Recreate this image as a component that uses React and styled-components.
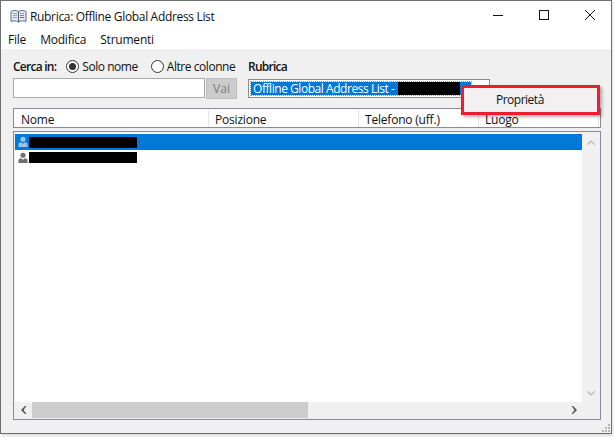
import React from 'react';
import styled, { createGlobalStyle } from 'styled-components';

const GlobalStyle = createGlobalStyle`
  html, body {
    margin: 0;
    padding: 0;
    background: #fff;
    overflow: hidden;
  }
  body {
    font-family: "Open Sans", "Liberation Sans", sans-serif;
    font-size: 12px;
    color: #111;
  }
`;

const Page = styled.div`
  width: 614px;
  height: 437px;
`;

const Window = styled.div`
  position: relative;
  box-sizing: border-box;
  width: 612px;
  height: 434px;
  border: 1px solid #6e6e6e;
  display: flex;
  flex-direction: column;
  background: #f0f0f0;
  box-shadow: 1px 2px 3px rgba(0, 0, 0, 0.14);
`;

const TitleBar = styled.div`
  height: 30px;
  background: #fff;
  display: flex;
  align-items: center;
  padding-left: 9px;
  flex: none;
`;

const Title = styled.span`
  margin-left: 3px;
  letter-spacing: -0.33px;
  color: #111;
`;

const WindowButtons = styled.div`
  margin-left: auto;
  display: flex;
  height: 30px;
`;

const WindowButton = styled.div`
  box-sizing: border-box;
  width: 46px;
  height: 30px;
  padding: 0 0 2px 4px;
  display: flex;
  align-items: center;
  justify-content: center;
`;

const MenuBar = styled.div`
  height: 18px;
  padding: 0 0 1px 7px;
  box-sizing: border-box;
  background: #fff;
  display: flex;
  align-items: center;
  gap: 14px;
  flex: none;
  letter-spacing: -0.22px;
`;

const Content = styled.div`
  flex: 1;
  display: flex;
  flex-direction: column;
  padding: 7px 10px 13px 12px;
  min-height: 0;
`;

const SearchArea = styled.div`
  display: flex;
  gap: 11px;
  flex: none;
`;

const SearchColumn = styled.div`
  width: 224px;
  display: flex;
  flex-direction: column;
`;

const RadioRow = styled.div`
  height: 20px;
  margin-bottom: 2px;
  display: flex;
  align-items: center;
  letter-spacing: -0.45px;
  white-space: nowrap;
`;

const Bold = styled.span`
  font-weight: 600;
  letter-spacing: -0.75px;
  margin-right: ${(p) => p.$gap || 0}px;
`;

const Radio = styled.span`
  box-sizing: border-box;
  width: 13px;
  height: 13px;
  border-radius: 50%;
  border: 1px solid #333;
  background: #fff;
  display: flex;
  align-items: center;
  justify-content: center;
  margin-right: 3px;
  flex: none;
  &::after {
    content: '';
    display: ${(p) => (p.$checked ? 'block' : 'none')};
    width: 7px;
    height: 7px;
    border-radius: 50%;
    background: #333;
  }
`;

const RadioLabel = styled.span`
  margin-right: ${(p) => p.$gap || 0}px;
`;

const InputRow = styled.div`
  display: flex;
  gap: 1px;
  height: 21px;
`;

const TextInput = styled.div`
  box-sizing: border-box;
  width: 192px;
  height: 20px;
  background: #fff;
  border: 1px solid #a9a9a9;
`;

const GoButton = styled.div`
  box-sizing: border-box;
  width: 31px;
  height: 21px;
  background: #cccccc;
  border: 1px solid #bfbfbf;
  color: #7a7a7a;
  display: flex;
  align-items: center;
  justify-content: center;
`;

const BookColumn = styled.div`
  display: flex;
  flex-direction: column;
`;

const BookLabel = styled.div`
  height: 20px;
  margin-bottom: 3px;
  display: flex;
  align-items: center;
`;

const Combo = styled.div`
  box-sizing: border-box;
  width: 242px;
  height: 19px;
  background: #fff;
  border: 1px solid #8c8c8c;
  padding: 2px 0 2px 2px;
  display: flex;
`;

const ComboSelection = styled.div`
  box-sizing: border-box;
  width: 220px;
  height: 13px;
  background: #0078d7;
  color: #fff;
  outline: 1px dotted #e08a2c;
  display: flex;
  align-items: center;
  padding-left: 2px;
  white-space: nowrap;
  letter-spacing: -0.45px;
`;

const ComboRedaction = styled.span`
  width: 62px;
  height: 13px;
  background: #000;
  margin-left: 3px;
  flex: none;
`;

const HeaderRow = styled.div`
  box-sizing: border-box;
  width: 588px;
  height: 20px;
  margin-top: 9px;
  flex: none;
  background: #fff;
  border: 1px solid #8a8a96;
  display: flex;
  align-items: center;
`;

const HeaderCell = styled.div`
  box-sizing: border-box;
  width: ${(p) => p.$width}px;
  height: 17px;
  padding: 2px 0 0 ${(p) => p.$pad || 6}px;
  border-right: 1px solid #e3e3e3;
  display: flex;
  align-items: center;
  letter-spacing: -0.2px;
`;

const ListBox = styled.div`
  box-sizing: border-box;
  width: 588px;
  height: 289px;
  margin-top: 3px;
  flex: none;
  background: #f0f0f0;
  border: 1px solid #8a8a96;
  padding: 1px;
  display: grid;
  grid-template-columns: 1fr 17px;
  grid-template-rows: 1fr 16px;
`;

const Rows = styled.div`
  background: #fff;
  padding-top: 1px;
`;

const Row = styled.div`
  height: ${(p) => (p.$selected ? 16 : 15)}px;
  display: flex;
  align-items: center;
  padding-left: 3px;
  background: ${(p) => (p.$selected ? '#0078d7' : 'transparent')};
`;

const Redaction = styled.span`
  width: 108px;
  height: 11px;
  background: #000;
  margin-left: 1px;
`;

const VScroll = styled.div`
  background: #f0f0f0;
  display: flex;
  flex-direction: column;
  justify-content: space-between;
  align-items: center;
  padding: 5px 0 4px;
`;

const HScroll = styled.div`
  background: #f0f0f0;
  display: flex;
  align-items: center;
`;

const ScrollEnd = styled.div`
  width: 17px;
  height: 16px;
  display: flex;
  align-items: center;
  justify-content: center;
  flex: none;
`;

const Track = styled.div`
  flex: 1;
  display: flex;
  height: 100%;
`;

const Thumb = styled.div`
  width: 276px;
  height: 100%;
  background: #cdcdcd;
`;

const Corner = styled.div`
  background: #f0f0f0;
`;

const Grip = styled.svg`
  position: absolute;
  right: 0;
  bottom: 0;
`;

const ContextMenu = styled.div`
  position: absolute;
  left: 460px;
  top: 84px;
  box-sizing: border-box;
  width: 139px;
  height: 30px;
  background: #f2f0f0;
  border: 3px solid #ed1c2e;
  padding: 0 0 1px 32px;
  display: flex;
  align-items: center;
  letter-spacing: -0.5px;
  box-shadow: 2px 2px 3px rgba(0, 0, 0, 0.3);
`;

const Chevron = ({ dir, color }) => {
  const paths = {
    up: 'M1 6 L5 2 L9 6 L9 7.5 L5 4.5 L1 7.5 Z',
    down: 'M1 2.5 L5 5.5 L9 2.5 L9 4 L5 8 L1 4 Z',
    left: 'M6 1 L2 5 L6 9 L7.5 9 L4.5 5 L7.5 1 Z',
    right: 'M4 1 L8 5 L4 9 L2.5 9 L5.5 5 L2.5 1 Z',
  };
  return (
    <svg width="10" height="10" viewBox="0 0 10 10">
      <path d={paths[dir]} fill={color} />
    </svg>
  );
};

const BookIcon = () => (
  <svg width="17" height="14" viewBox="0 0 17 14">
    <path d="M1 2.5 C3 1 6 1 8.5 2.5 C11 1 14 1 16 2.5 V12.5 C14 11.5 11 11.5 8.5 13 C6 11.5 3 11.5 1 12.5 Z" fill="#dfe8f2" stroke="#5b6f8f" strokeWidth="1" />
    <path d="M8.5 2.5 V13" stroke="#4a5a75" strokeWidth="1" />
    <path d="M3 4.5 H7 M3 6.5 H7 M3 8.5 H7" stroke="#8fa5c2" strokeWidth="1" />
    <path d="M10 4.5 H14" stroke="#c8a030" strokeWidth="1" />
    <path d="M10 6.5 H14" stroke="#6a9d4a" strokeWidth="1" />
    <path d="M10 8.5 H14" stroke="#c05a4a" strokeWidth="1" />
  </svg>
);

const UserIcon = ({ color }) => (
  <svg width="10" height="12" viewBox="0 0 11 13">
    <circle cx="5.5" cy="3.5" r="2.8" fill={color} />
    <path d="M0.5 12 V9 C0.5 7.5 2 7 3.5 6.8 L5.5 8.5 L7.5 6.8 C9 7 10.5 7.5 10.5 9 V12 Z" fill={color} />
  </svg>
);

const columns = [
  { label: 'Nome', width: 195, pad: 7 },
  { label: 'Posizione', width: 150 },
  { label: 'Telefono (uff.)', width: 120 },
  { label: 'Luogo', width: 120 },
];

function App() {
  return (
    <Page>
      <GlobalStyle />
      <Window>
        <TitleBar>
          <BookIcon />
          <Title>Rubrica: Offline Global Address List</Title>
          <WindowButtons>
            <WindowButton>
              <svg width="10" height="10" viewBox="0 0 10 10">
                <path d="M0 5.5 H10" stroke="#111" />
              </svg>
            </WindowButton>
            <WindowButton>
              <svg width="10" height="10" viewBox="0 0 10 10">
                <rect x="0.5" y="0.5" width="9" height="9" fill="none" stroke="#111" />
              </svg>
            </WindowButton>
            <WindowButton>
              <svg width="10" height="10" viewBox="0 0 10 10">
                <path d="M0 0 L10 10 M10 0 L0 10" stroke="#111" />
              </svg>
            </WindowButton>
          </WindowButtons>
        </TitleBar>
        <MenuBar>
          <span>File</span>
          <span>Modifica</span>
          <span>Strumenti</span>
        </MenuBar>
        <Content>
          <SearchArea>
            <SearchColumn>
              <RadioRow>
                <Bold $gap={10}>Cerca in:</Bold>
                <Radio $checked />
                <RadioLabel $gap={13}>Solo nome</RadioLabel>
                <Radio />
                <RadioLabel>Altre colonne</RadioLabel>
              </RadioRow>
              <InputRow>
                <TextInput />
                <GoButton>Vai</GoButton>
              </InputRow>
            </SearchColumn>
            <BookColumn>
              <BookLabel>
                <Bold>Rubrica</Bold>
              </BookLabel>
              <Combo>
                <ComboSelection>
                  Offline Global Address List -
                  <ComboRedaction />
                </ComboSelection>
              </Combo>
            </BookColumn>
          </SearchArea>
          <HeaderRow>
            {columns.map((c) => (
              <HeaderCell key={c.label} $width={c.width} $pad={c.pad}>
                {c.label}
              </HeaderCell>
            ))}
          </HeaderRow>
          <ListBox>
            <Rows>
              <Row $selected>
                <UserIcon color="#9cc4ea" />
                <Redaction />
              </Row>
              <Row>
                <UserIcon color="#6f6f6f" />
                <Redaction />
              </Row>
            </Rows>
            <VScroll>
              <Chevron dir="up" color="#c2c2c2" />
              <Chevron dir="down" color="#c2c2c2" />
            </VScroll>
            <HScroll>
              <ScrollEnd>
                <Chevron dir="left" color="#505050" />
              </ScrollEnd>
              <Track>
                <Thumb />
              </Track>
              <ScrollEnd>
                <Chevron dir="right" color="#505050" />
              </ScrollEnd>
            </HScroll>
            <Corner />
          </ListBox>
        </Content>
        <Grip width="9" height="9" viewBox="0 0 9 9">
          <path d="M6 0 h2 v2 h-2 Z M3 3 h2 v2 h-2 Z M6 3 h2 v2 h-2 Z M0 6 h2 v2 h-2 Z M3 6 h2 v2 h-2 Z M6 6 h2 v2 h-2 Z" fill="#b5b5b5" />
        </Grip>
        <ContextMenu>Proprietà</ContextMenu>
      </Window>
    </Page>
  );
}

export default App;
